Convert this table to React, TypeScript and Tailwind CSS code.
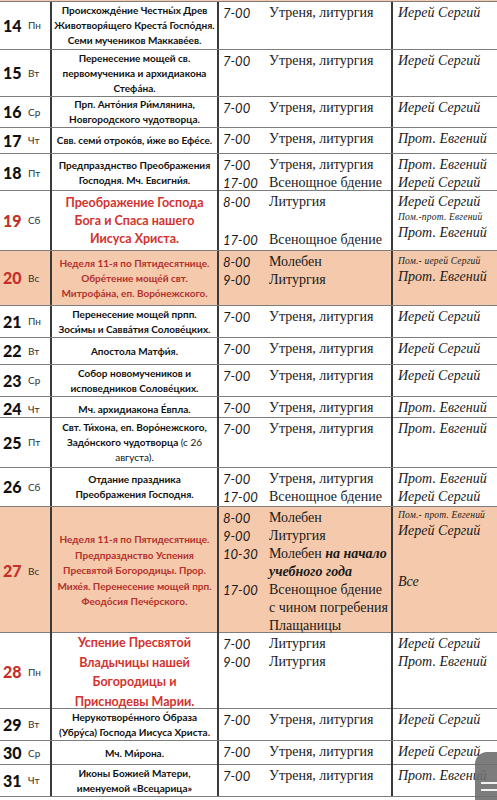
import React from "react";

const ORANGE = "bg-[#f5c9ab]";

function T({ t, s }: { t: string; s: React.ReactNode }) {
  return (
    <div className="grid grid-cols-[46px_1fr] leading-[18px]">
      <span className="italic text-[13px] font-['Lato'] text-[#1a1a1a]">{t}</span>
      <span className="text-[14px] font-['Liberation_Serif'] text-[#1a1a1a]">{s}</span>
    </div>
  );
}

function P({ children }: { children: React.ReactNode }) {
  return (
    <div className="italic text-[14px] leading-[18px] font-['Liberation_Serif'] text-[#1a1a1a]">{children}</div>
  );
}

function PS({ children }: { children: React.ReactNode }) {
  return (
    <div className="italic text-[9.5px] leading-[13px] tracking-[0.2px] font-['Liberation_Serif'] text-[#1a1a1a]">
      {children}
    </div>
  );
}

type RowProps = {
  h: string;
  bg?: string;
  num: string;
  day: string;
  red?: boolean;
  desc: React.ReactNode;
  descCls?: string;
  times: React.ReactNode;
  priest: React.ReactNode;
};

function Row({ h, bg = "bg-white", num, day, red, desc, descCls, times, priest }: RowProps) {
  return (
    <div className={`grid grid-cols-[52px_167px_174px_1fr] border-b border-[#7d7d7d] ${h} ${bg}`}>
      <div className="flex items-center border-r-2 border-[#3a3a3a] pl-[3px] font-['Lato']">
        <span className={`w-[25px] text-[16px] font-black ${red ? "text-[#c42f2a]" : "text-[#111]"}`}>{num}</span>
        <span className="text-[10px] text-[#333]">{day}</span>
      </div>
      <div
        className={`flex items-center justify-center text-center border-r-2 border-[#3a3a3a] font-['Lato'] px-[2px] ${
          descCls ?? "text-[10px] leading-[15px] font-bold text-[#111]"
        }`}
      >
        <div>{desc}</div>
      </div>
      <div className="border-r-2 border-[#3a3a3a] pl-[4px] pt-[2px]">{times}</div>
      <div className="pl-[5px] pt-[2px]">{priest}</div>
    </div>
  );
}

const SERG = "Иерей Сергий";
const EVG = "Прот. Евгений";

export default function App() {
  return (
    <div className="relative w-[497px] h-[800px] overflow-hidden bg-white">
      <div className={`h-[2px] ${ORANGE} border-b border-[#7d7d7d]`} />
      <Row
        h="h-[48px]"
        num="14"
        day="Пн"
        desc={
          <>
            Происхожде́ние Честны́х Древ
            <br />
            Животворя́щего Креста́ Госпо́дня.
            <br />
            Семи мучеников Маккаве́ев.
          </>
        }
        times={<T t="7-00" s="Утреня, литургия" />}
        priest={<P>{SERG}</P>}
      />
      <Row
        h="h-[47px]"
        num="15"
        day="Вт"
        desc={
          <>
            Перенесение мощей св.
            <br />
            первомученика и архидиакона
            <br />
            Стефа́на.
          </>
        }
        times={<T t="7-00" s="Утреня, литургия" />}
        priest={<P>{SERG}</P>}
      />
      <Row
        h="h-[31px]"
        num="16"
        day="Ср"
        desc={
          <>
            Прп. Анто́ния Ри́млянина,
            <br />
            Новгородского чудотворца.
          </>
        }
        times={<T t="7-00" s="Утреня, литургия" />}
        priest={<P>{SERG}</P>}
      />
      <Row
        h="h-[26px]"
        num="17"
        day="Чт"
        desc={<>Свв. семи́ отроко́в, и́же во Ефе́се.</>}
        times={<T t="7-00" s="Утреня, литургия" />}
        priest={<P>{EVG}</P>}
      />
      <Row
        h="h-[37px]"
        num="18"
        day="Пт"
        desc={
          <>
            Предпразднство Преображения
            <br />
            Господня. Мч. Евсигни́я.
          </>
        }
        times={
          <>
            <T t="7-00" s="Утреня, литургия" />
            <T t="17-00" s="Всенощное бдение" />
          </>
        }
        priest={
          <>
            <P>{EVG}</P>
            <P>{SERG}</P>
          </>
        }
      />
      <Row
        h="h-[60px]"
        num="19"
        day="Сб"
        red
        descCls="text-[12.5px] leading-[18px] font-bold text-[#d2332f]"
        desc={
          <>
            Преображение Господа
            <br />
            Бога и Спаса нашего
            <br />
            Иисуса Христа.
          </>
        }
        times={
          <div className="flex flex-col justify-between h-full pb-[1px]">
            <T t="8-00" s="Литургия" />
            <T t="17-00" s="Всенощное бдение" />
          </div>
        }
        priest={
          <>
            <P>{SERG}</P>
            <PS>Пом.-прот. Евгений</PS>
            <P>{EVG}</P>
          </>
        }
      />
      <Row
        h="h-[55px]"
        bg={ORANGE}
        num="20"
        day="Вс"
        red
        descCls="text-[10px] leading-[15px] font-bold text-[#b3302b]"
        desc={
          <>
            Неделя 11-я по Пятидесятнице.
            <br />
            Обре́тение моще́й свт.
            <br />
            Митрофа́на, еп. Воро́нежского.
          </>
        }
        times={
          <>
            <T t="8-00" s="Молебен" />
            <T t="9-00" s="Литургия" />
          </>
        }
        priest={
          <>
            <div className="pt-[2px]">
              <PS>Пом.- иерей Сергий</PS>
            </div>
            <P>{EVG}</P>
          </>
        }
      />
      <Row
        h="h-[32px]"
        num="21"
        day="Пн"
        desc={
          <>
            Перенесение мощей прпп.
            <br />
            Зоси́мы и Савва́тия Солове́цких.
          </>
        }
        times={<T t="7-00" s="Утреня, литургия" />}
        priest={<P>{SERG}</P>}
      />
      <Row
        h="h-[27px]"
        num="22"
        day="Вт"
        desc={<>Апостола Матфи́я.</>}
        times={<T t="7-00" s="Утреня, литургия" />}
        priest={<P>{SERG}</P>}
      />
      <Row
        h="h-[32px]"
        num="23"
        day="Ср"
        desc={
          <>
            Собор новомучеников и
            <br />
            исповедников Солове́цких.
          </>
        }
        times={<T t="7-00" s="Утреня, литургия" />}
        priest={<P>{SERG}</P>}
      />
      <Row
        h="h-[21px]"
        num="24"
        day="Чт"
        desc={<>Мч. архидиакона Е́впла.</>}
        times={<T t="7-00" s="Утреня, литургия" />}
        priest={<P>{EVG}</P>}
      />
      <Row
        h="h-[50px]"
        num="25"
        day="Пт"
        desc={
          <>
            Свт. Ти́хона, еп. Воро́нежского,
            <br />
            Задо́нского чудотворца <span className="font-normal">(с 26</span>
            <br />
            <span className="font-normal">августа).</span>
          </>
        }
        times={<T t="7-00" s="Утреня, литургия" />}
        priest={<P>{EVG}</P>}
      />
      <Row
        h="h-[39px]"
        num="26"
        day="Сб"
        desc={
          <>
            Отдание праздника
            <br />
            Преображения Господня.
          </>
        }
        times={
          <>
            <T t="7-00" s="Утреня, литургия" />
            <T t="17-00" s="Всенощное бдение" />
          </>
        }
        priest={
          <>
            <P>{EVG}</P>
            <P>{SERG}</P>
          </>
        }
      />
      <Row
        h="h-[126px]"
        bg={ORANGE}
        num="27"
        day="Вс"
        red
        descCls="text-[10px] leading-[15.5px] font-bold text-[#b3302b]"
        desc={
          <>
            Неделя 11-я по Пятидесятнице.
            <br />
            Предпразднство Успения
            <br />
            Пресвятой Богородицы. Прор.
            <br />
            Михе́я. Перенесение мощей прп.
            <br />
            Феодо́сия Пече́рского.
          </>
        }
        times={
          <>
            <T t="8-00" s="Молебен" />
            <T t="9-00" s="Литургия" />
            <T
              t="10-30"
              s={
                <>
                  Молебен <b className="italic">на начало</b>
                  <br />
                  <b className="italic">учебного года</b>
                </>
              }
            />
            <T
              t="17-00"
              s={
                <>
                  Всенощное бдение
                  <br />
                  с чином погребения
                  <br />
                  Плащаницы
                </>
              }
            />
          </>
        }
        priest={
          <>
            <PS>Пом.- прот. Евгений</PS>
            <P>{SERG}</P>
            <div className="h-[33px]" />
            <P>Все</P>
          </>
        }
      />
      <Row
        h="h-[76px]"
        num="28"
        day="Пн"
        red
        descCls="text-[12.5px] leading-[19.5px] font-bold text-[#d2332f]"
        desc={
          <>
            Успение Пресвятой
            <br />
            Владычицы нашей
            <br />
            Богородицы и
            <br />
            Приснодевы Марии.
          </>
        }
        times={
          <>
            <T t="7-00" s="Литургия" />
            <T t="9-00" s="Литургия" />
          </>
        }
        priest={
          <>
            <P>{SERG}</P>
            <P>{EVG}</P>
          </>
        }
      />
      <Row
        h="h-[32px]"
        num="29"
        day="Вт"
        desc={
          <>
            Нерукотворе́нного О́браза
            <br />
            (Убру́са) Господа Иисуса Христа.
          </>
        }
        times={<T t="7-00" s="Утреня, литургия" />}
        priest={<P>{SERG}</P>}
      />
      <Row
        h="h-[24px]"
        num="30"
        day="Ср"
        desc={<>Мч. Ми́рона.</>}
        times={<T t="7-00" s="Утреня, литургия" />}
        priest={<P>{SERG}</P>}
      />
      <Row
        h="h-[32px]"
        num="31"
        day="Чт"
        desc={
          <>
            Иконы Божией Матери,
            <br />
            именуемой «Всецарица»
          </>
        }
        times={<T t="7-00" s="Утреня, литургия" />}
        priest={<P>{EVG}</P>}
      />
      <div className="absolute right-0 bottom-0 w-[22px] h-[48px] rounded-tl-[12px] bg-[#6e6e6e]/90 flex flex-col items-end justify-end gap-[5px] pb-[9px]">
        <div className="h-[2px] w-[16px] bg-white/90" />
        <div className="h-[2px] w-[16px] bg-white/90" />
      </div>
    </div>
  );
}
